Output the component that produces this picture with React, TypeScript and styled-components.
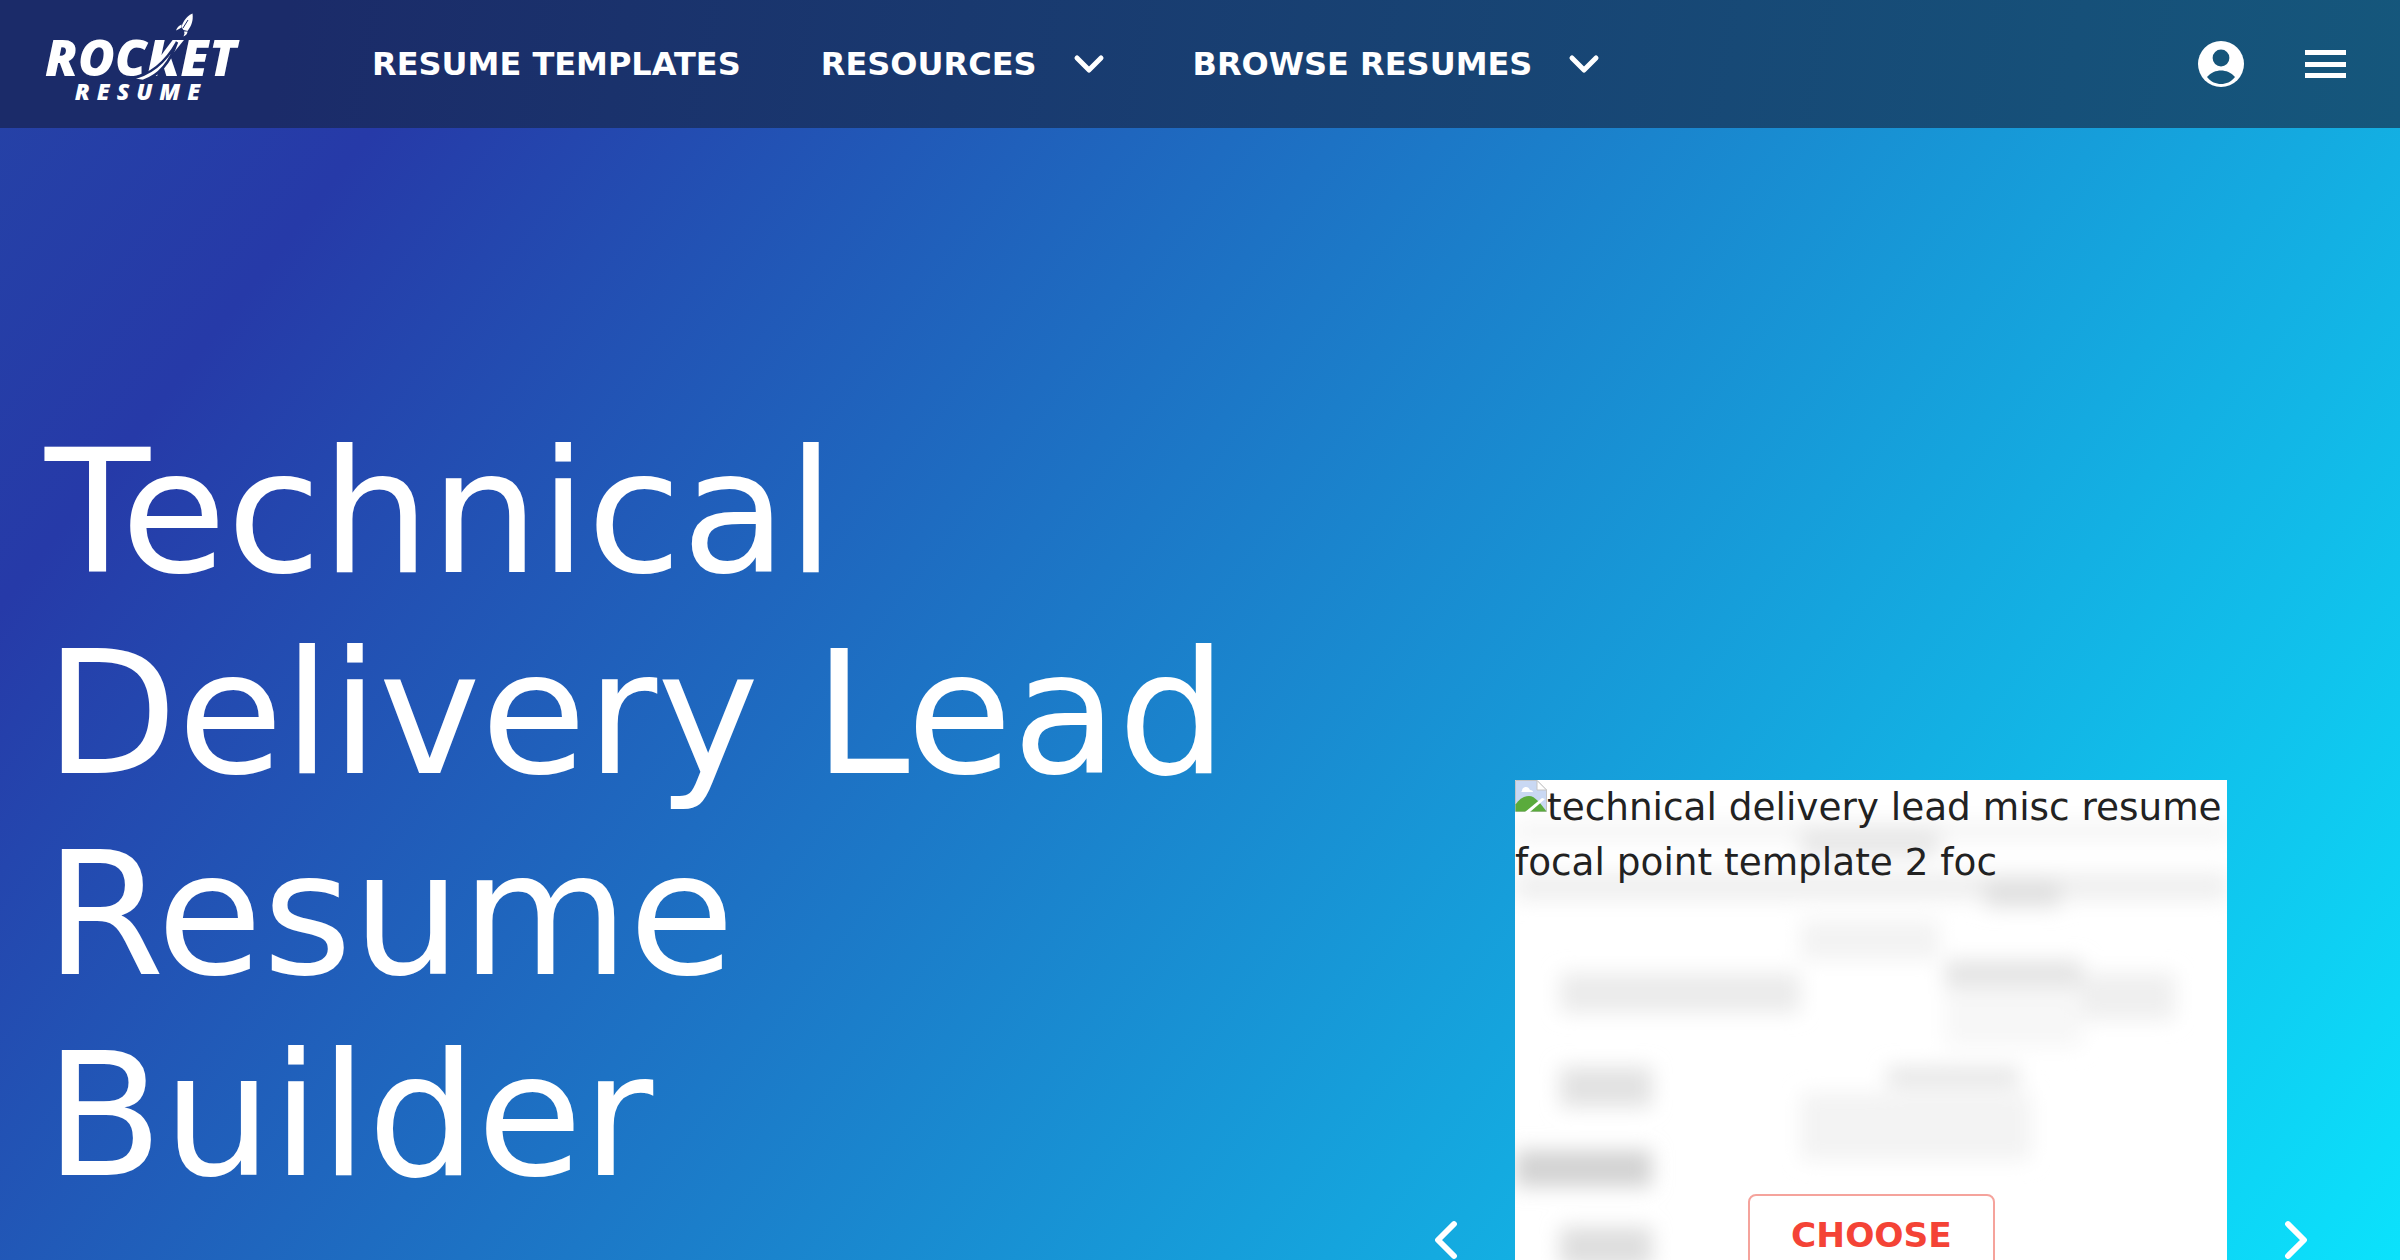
import styled, { createGlobalStyle } from 'styled-components';
import { ChevronDown, ChevronLeft, ChevronRight } from 'lucide-react';

const GlobalStyle = createGlobalStyle`
  html, body {
    margin: 0;
    padding: 0;
  }
  body {
    font-family: "DejaVu Sans", sans-serif;
    overflow: hidden;
  }
`;

const RocketIcon = () => (
  <svg width="20" height="26" viewBox="0 0 20 26">
    <path d="M17.5 1.500C18.500 8 16.500 14 12.500 19L8.500 18 6.500 15C8 9 12 4 17.500 1.500z" fill="#fff" />
    <path d="M1 18.500C2 15.500 4 13.500 6.500 12.500L6.500 15.500 4 17zM9 19.500L12.500 19.500C12.500 21.500 11 23.500 8.500 24.500L9.500 21.500z" fill="#fff" />
    <path d="M8 16L13 8" stroke="#1b2a68" strokeWidth="1" />
  </svg>
);

const LogoSwoosh = () => (
  <svg width="190" height="68" viewBox="0 0 190 68">
    <path d="M84 43C106 39 121 24 131 6C124 27 112 40 97 45z" fill="#fff" stroke="#1b2b69" strokeWidth="2.500" />
  </svg>
);

const ProfileIcon = () => (
  <svg width="46" height="46" viewBox="0 0 46 46">
    <circle cx="23" cy="23" r="23" fill="#fff" />
    <circle cx="23" cy="17" r="8.400" fill="#15557a" />
    <path d="M9 36c4-4.500 9-6.500 14-6.500s10 2 14 6.500c-4 5-9 7-14 7S13 41 9 36z" fill="#15557a" />
  </svg>
);

const BrokenImageIcon = () => (
  <BrokenIcon width="32" height="32" viewBox="0 0 32 32">
    <path d="M.5.500H22L31.500 10v21.500H.5z" fill="#c9d8f3" stroke="#c4c4c4" />
    <path d="M22 .5V10h9.500z" fill="#fff" stroke="#c4c4c4" />
    <path d="M7 11c0-3 2-4 4-4s3 1 4 3c2 0 3 1 3 2H6z" fill="#fff" />
    <path d="M.5 31.500v-7C5 18 10 16 14 16c6 0 12 8 17.500 15.500z" fill="#5aab3c" />
    <path d="M10 32L27 18l3 1L15 32z" fill="#fff" />
  </BrokenIcon>
);

const BlurredResume = () => (
  <ResumeSvg viewBox="0 0 712 480">
    <defs>
      <filter id="soft" x="-10%" y="-10%" width="120%" height="120%">
        <feGaussianBlur stdDeviation="10" />
      </filter>
    </defs>
    <g filter="url(#soft)">
      <rect x="0" y="42" width="712" height="18" fill="#f4f4f4" />
      <rect x="286" y="47" width="138" height="30" fill="#e8e8e8" />
      <rect x="0" y="93" width="712" height="27" fill="#efefef" />
      <rect x="470" y="100" width="75" height="27" fill="#e0e0e0" />
      <rect x="286" y="140" width="138" height="40" fill="#f3f3f3" />
      <rect x="45" y="193" width="240" height="40" fill="#ebebeb" />
      <rect x="430" y="180" width="137" height="27" fill="#e4e4e4" />
      <rect x="430" y="207" width="137" height="60" fill="#f7f7f7" />
      <rect x="567" y="193" width="93" height="47" fill="#efefef" />
      <rect x="45" y="287" width="92" height="40" fill="#e2e2e2" />
      <rect x="372" y="287" width="132" height="20" fill="#e6e6e6" />
      <rect x="286" y="313" width="230" height="67" fill="#f3f3f3" />
      <rect x="0" y="370" width="137" height="37" fill="#d3d3d3" />
      <rect x="45" y="447" width="92" height="40" fill="#dedede" />
    </g>
  </ResumeSvg>
);

const navItems = [
  { label: 'RESUME TEMPLATES', menu: false },
  { label: 'RESOURCES', menu: true },
  { label: 'BROWSE RESUMES', menu: true },
];

export default function App() {
  return (
    <Page>
      <GlobalStyle />
      <Header>
        <Logo href="#">
          <LogoRocket><RocketIcon /></LogoRocket>
          <LogoMain>ROCKET</LogoMain>
          <LogoSub>RESUME</LogoSub>
          <LogoMark><LogoSwoosh /></LogoMark>
        </Logo>
        <Nav>
          {navItems.map((item) => (
            <NavItem key={item.label} href="#">
              {item.label}
              {item.menu && <ChevronDown size={48} strokeWidth={2.5} />}
            </NavItem>
          ))}
        </Nav>
        <HeaderActions>
          <ProfileIcon />
          <MenuButton>
            <span />
            <span />
            <span />
          </MenuButton>
        </HeaderActions>
      </Header>
      <Hero>
        <Title>Technical Delivery Lead Resume Builder</Title>
        <Carousel>
          <Arrow><ChevronLeft size={64} strokeWidth={2.2} /></Arrow>
          <Card>
            <BlurredResume />
            <AltText>
              <BrokenImageIcon />technical delivery lead misc resume focal point template 2 foc
            </AltText>
            <ChooseButton>CHOOSE</ChooseButton>
          </Card>
          <Arrow><ChevronRight size={64} strokeWidth={2.2} /></Arrow>
        </Carousel>
      </Hero>
    </Page>
  );
}

const Page = styled.div`
  height: 1260px;
  overflow: hidden;
  display: flex;
  flex-direction: column;
  background: linear-gradient(128deg, #2543a6 0%, #263aa8 14%, #0be2fc 100%);
`;

const Header = styled.header`
  flex: 0 0 128px;
  display: flex;
  align-items: center;
  padding: 0 54px 0 46px;
  background: linear-gradient(100deg, #1b2b69 0%, #1b2b69 12%, #15577c 100%);
`;

const Logo = styled.a`
  position: relative;
  display: flex;
  flex-direction: column;
  align-items: center;
  width: 190px;
  margin-top: 12px;
  color: #fff;
  text-decoration: none;
  font-family: "Open Sans", sans-serif;
  font-style: italic;
  font-weight: 800;
`;

const LogoRocket = styled.span`
  position: absolute;
  top: -24px;
  left: 129px;
`;

const LogoMark = styled.span`
  position: absolute;
  top: 0;
  left: 0;
  display: flex;
`;

const LogoMain = styled.span`
  font-size: 50px;
  line-height: 42px;
  letter-spacing: 0.3px;
`;

const LogoSub = styled.span`
  font-size: 23px;
  line-height: 26px;
  letter-spacing: 7px;
`;

const Nav = styled.nav`
  display: flex;
  align-items: center;
  gap: 80px;
  margin-left: 136px;
`;

const NavItem = styled.a`
  display: flex;
  align-items: center;
  gap: 28px;
  color: #fff;
  text-decoration: none;
  font-size: 32px;
  font-weight: 700;
  white-space: nowrap;

  svg {
    margin: 0;
  }
`;

const HeaderActions = styled.div`
  margin-left: auto;
  display: flex;
  align-items: center;
  gap: 61px;
`;

const MenuButton = styled.div`
  display: flex;
  flex-direction: column;
  gap: 6.5px;
  width: 41px;

  span {
    display: block;
    height: 5px;
    background: #fff;
  }
`;

const Hero = styled.main`
  flex: 1;
  display: flex;
  justify-content: space-between;
  align-items: flex-start;
`;

const Title = styled.h1`
  width: 1260px;
  margin: 284px 0 0;
  padding-left: 45px;
  box-sizing: border-box;
  color: #fff;
  font-size: 172px;
  font-weight: 400;
  line-height: 201px;
`;

const Carousel = styled.div`
  display: flex;
  align-items: center;
  gap: 37px;
  margin: 652px 72px 0 0;
`;

const Arrow = styled.div`
  display: flex;
  color: #fff;
`;

const Card = styled.div`
  position: relative;
  width: 712px;
  height: 920px;
  background: #fff;
`;

const ResumeSvg = styled.svg`
  position: absolute;
  inset: 0;
  width: 712px;
  height: 480px;
`;

const AltText = styled.div`
  position: relative;
  color: #222;
  font-size: 37.4px;
  line-height: 55px;
`;

const BrokenIcon = styled.svg`
  vertical-align: top;
`;

const ChooseButton = styled.button`
  position: absolute;
  top: 414px;
  left: 233px;
  width: 247px;
  height: 100px;
  background: #fff;
  border: 2px solid #f5a39c;
  border-radius: 8px;
  color: #f44336;
  font-family: "DejaVu Sans", sans-serif;
  font-size: 34.4px;
  font-weight: 700;
  padding: 0 0 18px;
`;
